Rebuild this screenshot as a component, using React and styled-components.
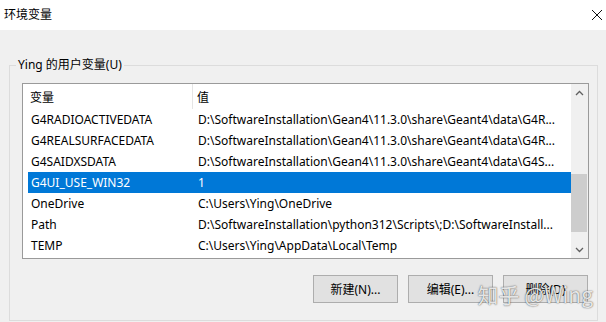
import React from "react";
import styled, { createGlobalStyle } from "styled-components";

const GlobalStyle = createGlobalStyle`
  html, body {
    margin: 0;
    padding: 0;
    background: #f0f0f0;
  }
  body {
    font-family: "Noto Sans", "Noto Sans CJK SC", sans-serif;
    font-size: 12px;
    color: #000;
  }
`;

const Window = styled.div`
  position: relative;
  width: 606px;
  height: 322px;
  overflow: hidden;
  display: flex;
  flex-direction: column;
  background: #f0f0f0;
`;

const TitleBar = styled.div`
  height: 30px;
  flex: none;
  background: #fff;
  display: flex;
  align-items: center;
  justify-content: space-between;
  padding: 0 3px 0 4px;
`;

const Title = styled.span`
  font-size: 12px;
  line-height: 16px;
`;

const CloseIcon = styled.svg`
  width: 12px;
  height: 12px;
  display: block;
`;

const Body = styled.div`
  flex: 1;
  padding: 35px 8px 1px 9px;
  display: flex;
`;

const GroupBox = styled.div`
  position: relative;
  flex: 1;
  border: 1px solid #dcdcdc;
  padding: 17px 8px 0 12px;
  display: flex;
  flex-direction: column;
`;

const Caption = styled.span`
  position: absolute;
  top: -9px;
  left: 6px;
  padding: 0 2px;
  background: #f0f0f0;
  line-height: 16px;
`;

const List = styled.div`
  height: 174px;
  border: 1px solid #9a9a9a;
  background: #fff;
  display: flex;
`;

const ListContent = styled.div`
  flex: 1;
  display: flex;
  flex-direction: column;
  padding-left: 5px;
  overflow: hidden;
`;

const Header = styled.div`
  height: 25px;
  display: grid;
  grid-template-columns: 165px 1fr;
  align-items: stretch;
`;

const HeaderCell = styled.div`
  display: flex;
  align-items: center;
  padding-left: ${(p) => (p.$first ? "2px" : "4px")};
  border-right: ${(p) => (p.$first ? "1px solid #e5e5e5" : "none")};
`;

const Row = styled.div`
  height: 21px;
  display: grid;
  grid-template-columns: 165px 1fr;
  align-items: center;
  background: ${(p) => (p.$selected ? "#0078d7" : "transparent")};
  color: ${(p) => (p.$selected ? "#fff" : "#000")};
`;

const Cell = styled.div`
  padding-left: ${(p) => (p.$first ? "3px" : "5px")};
  white-space: nowrap;
  overflow: hidden;
  line-height: 16px;
`;

const ScrollBar = styled.div`
  width: 17px;
  flex: none;
  background: #f0f0f0;
  display: flex;
  flex-direction: column;
`;

const ArrowButton = styled.div`
  height: 17px;
  flex: none;
  display: flex;
  align-items: center;
  justify-content: center;
`;

const Track = styled.div`
  flex: 1;
  display: flex;
  flex-direction: column;
  padding-top: 73px;
`;

const Thumb = styled.div`
  height: 58px;
  margin: 0 1px 0 0;
  background: #cdcdcd;
`;

const ButtonRow = styled.div`
  display: flex;
  justify-content: flex-end;
  gap: 10px;
  margin-top: 16px;
  padding-right: 1px;
`;

const Button = styled.button`
  width: 85px;
  height: 28px;
  margin: 0;
  padding: 0;
  border: 1px solid #adadad;
  background: #e1e1e1;
  font-family: "Noto Sans", "Noto Sans CJK SC", sans-serif;
  font-size: 12px;
  color: #000;
`;

const Watermark = styled.div`
  position: absolute;
  right: 13px;
  bottom: 16px;
  font-family: "Noto Sans CJK SC", "Noto Sans", sans-serif;
  font-size: 21px;
  line-height: 24px;
  color: rgba(255, 255, 255, 0.85);
  text-shadow: 0 0 1px rgba(0, 0, 0, 0.55), 0 0 2px rgba(0, 0, 0, 0.35);
  white-space: nowrap;
`;

const Chevron = ({ up }) => (
  <svg width="9" height="6" viewBox="0 0 9 6">
    <polyline
      points={up ? "1,5 4.5,1.5 8,5" : "1,1 4.5,4.5 8,1"}
      fill="none"
      stroke="#606060"
      strokeWidth="1.3"
    />
  </svg>
);

const rows = [
  ["G4RADIOACTIVEDATA", "D:\\SoftwareInstallation\\Gean4\\11.3.0\\share\\Geant4\\data\\G4R..."],
  ["G4REALSURFACEDATA", "D:\\SoftwareInstallation\\Gean4\\11.3.0\\share\\Geant4\\data\\G4R..."],
  ["G4SAIDXSDATA", "D:\\SoftwareInstallation\\Gean4\\11.3.0\\share\\Geant4\\data\\G4S..."],
  ["G4UI_USE_WIN32", "1", true],
  ["OneDrive", "C:\\Users\\Ying\\OneDrive"],
  ["Path", "D:\\SoftwareInstallation\\python312\\Scripts\\;D:\\SoftwareInstall..."],
  ["TEMP", "C:\\Users\\Ying\\AppData\\Local\\Temp"],
];

export default function App() {
  return (
    <>
      <GlobalStyle />
      <Window>
        <TitleBar>
          <Title>环境变量</Title>
          <CloseIcon viewBox="0 0 12 12">
            <line x1="1" y1="1" x2="11" y2="11" stroke="#111" strokeWidth="1" />
            <line x1="11" y1="1" x2="1" y2="11" stroke="#111" strokeWidth="1" />
          </CloseIcon>
        </TitleBar>
        <Body>
          <GroupBox>
            <Caption>Ying 的用户变量(U)</Caption>
            <List>
              <ListContent>
                <Header>
                  <HeaderCell $first>变量</HeaderCell>
                  <HeaderCell>值</HeaderCell>
                </Header>
                {rows.map(([name, value, sel]) => (
                  <Row key={name} $selected={sel}>
                    <Cell $first>{name}</Cell>
                    <Cell>{value}</Cell>
                  </Row>
                ))}
              </ListContent>
              <ScrollBar>
                <ArrowButton>
                  <Chevron up />
                </ArrowButton>
                <Track>
                  <Thumb />
                </Track>
                <ArrowButton>
                  <Chevron />
                </ArrowButton>
              </ScrollBar>
            </List>
            <ButtonRow>
              <Button>新建(N)...</Button>
              <Button>编辑(E)...</Button>
              <Button>删除(D)</Button>
            </ButtonRow>
          </GroupBox>
        </Body>
        <Watermark>知乎 @Wing</Watermark>
      </Window>
    </>
  );
}
